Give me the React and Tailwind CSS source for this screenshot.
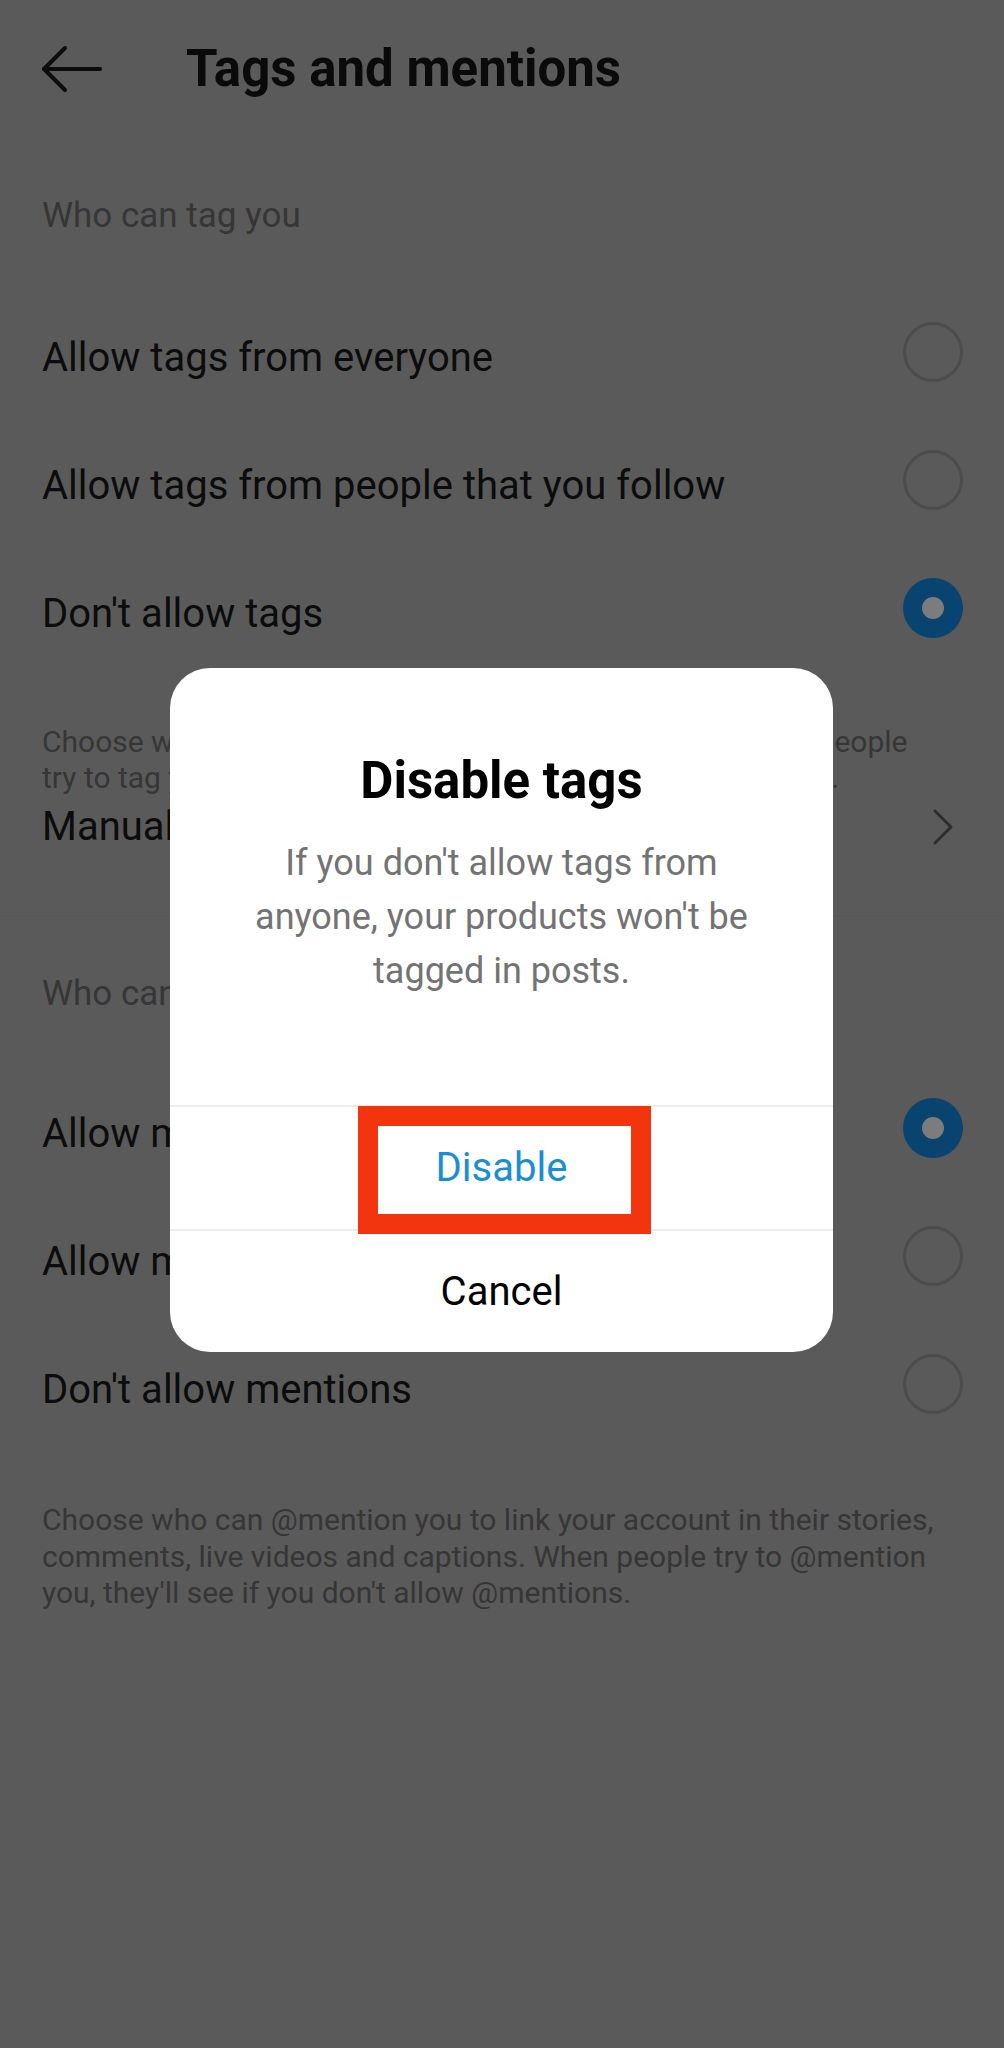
import React from "react";

const font = { fontFamily: "Roboto, 'Liberation Sans', sans-serif" };

function Radio({ checked }) {
    if (checked) {
        return (
            <div className="w-[60px] h-[60px] rounded-full bg-[#09436f] flex items-center justify-center shrink-0">
                <div className="w-[22px] h-[22px] rounded-full bg-[#7c7c7c]" />
            </div>
        );
    }
    return <div className="w-[60px] h-[60px] rounded-full border-[3px] border-[#4c4c4c] shrink-0" />;
}

function OptionRow({ label, checked }) {
    return (
        <div className="flex items-center justify-between h-[128px] pl-[42px] pr-[41px]">
            <span className="mt-[12px] text-[40px] leading-[48px] text-[#0c0c0c]">{label}</span>
            <Radio checked={checked} />
        </div>
    );
}

export default function App() {
    return (
        <div className="relative w-[1004px] min-h-[2048px] bg-[#5a5a5a] overflow-hidden" style={font}>
            {/* header */}
            <div className="flex items-center h-[138px] pl-[41px]">
                <svg width="62" height="48" viewBox="0 0 62 48" fill="none" stroke="#0c0c0c" strokeWidth="4" strokeLinecap="round" strokeLinejoin="round">
                    <path d="M3 24 H59" />
                    <path d="M24 3 L3 24 L24 45" />
                </svg>
                <h1 className="ml-[83px] text-[51px] leading-[60px] font-bold text-[#0a0a0a]">Tags and mentions</h1>
            </div>

            {/* tags section */}
            <div className="pt-[56px] pl-[42px] text-[35px] leading-[44px] text-[#363636]">Who can tag you</div>
            <div className="mt-[50px]">
                <OptionRow label="Allow tags from everyone" />
                <OptionRow label="Allow tags from people that you follow" />
                <OptionRow label="Don't allow tags" checked />
            </div>
            <p className="mt-[52px] px-[42px] text-[30px] leading-[36px] text-[#363636] whitespace-nowrap">
                Choose who can tag you in their photos and videos. When people
                <br />
                try to tag you, they'll see if you don't allow tags from anyone.
            </p>
            <div className="flex items-center justify-between mt-[9px] h-[44px] pl-[42px] pr-[50px]">
                <span className="text-[40px] leading-[44px] text-[#0c0c0c]">Manually approve tags</span>
                <svg width="22" height="38" viewBox="0 0 22 38" fill="none" stroke="#2e2e2e" strokeWidth="3" strokeLinecap="round" strokeLinejoin="round">
                    <path d="M3 3 L19 19 L3 35" />
                </svg>
            </div>
            <div className="mt-[66px] h-[2px] bg-[#585858]" />

            {/* mentions section */}
            <div className="mt-[55px] pl-[42px] text-[35px] leading-[44px] text-[#363636]">Who can @mention you</div>
            <div className="mt-[48px]">
                <OptionRow label="Allow mentions from everyone" checked />
                <OptionRow label="Allow mentions from people you follow" />
                <OptionRow label="Don't allow mentions" />
            </div>
            <p className="mt-[54px] px-[42px] text-[30px] leading-[36.5px] text-[#363636] whitespace-nowrap">
                Choose who can @mention you to link your account in their stories,
                <br />
                comments, live videos and captions. When people try to @mention
                <br />
                you, they'll see if you don't allow @mentions.
            </p>

            {/* dialog */}
            <div className="absolute left-[170px] top-[668px] w-[663px] h-[684px] bg-white rounded-[40px] flex flex-col">
                <div className="pt-[83px] px-[40px] text-center flex-1">
                    <h2 className="text-[51px] leading-[60px] font-bold text-black">Disable tags</h2>
                    <p className="mt-[25px] text-[36px] leading-[54px] text-[#737373]">
                        If you don't allow tags from
                        <br />
                        anyone, your products won't be
                        <br />
                        tagged in posts.
                    </p>
                </div>
                <div className="relative h-[124px] border-t-2 border-[#ececec] flex items-center justify-center">
                    <span className="text-[40px] leading-[48px] text-[#1b8ed3]">Disable</span>
                    <div className="absolute left-[188px] top-[-1px] w-[293px] h-[128px] border-[20px] border-[#f2350f]" />
                </div>
                <div className="h-[123px] border-t-2 border-[#ececec] flex items-center justify-center">
                    <span className="text-[40px] leading-[48px] text-black">Cancel</span>
                </div>
            </div>
        </div>
    );
}
